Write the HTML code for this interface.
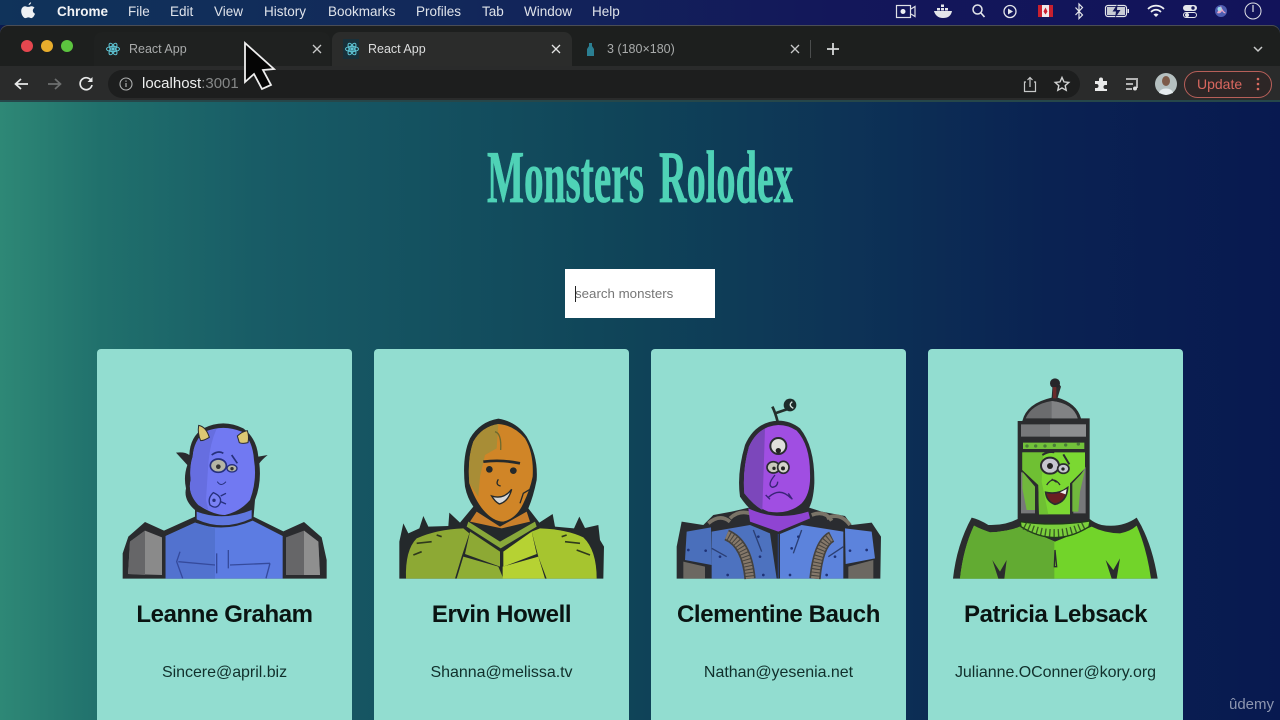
<!DOCTYPE html>
<html lang="en"><head><meta charset="utf-8"><title>Monsters Rolodex</title>
<style>
html,body{margin:0;padding:0;width:1280px;height:720px;overflow:hidden;background:#0a1a50}
body{position:relative;font-family:"Liberation Sans",sans-serif}
.a{position:absolute;white-space:nowrap}
.m{top:4px;font-size:13.5px;line-height:16px;color:#dfe3ea}
.tabt{top:41px;font-size:12.5px;line-height:16px}
.card{position:absolute;top:349px;width:255px;height:380px;background:#92ddd0;border-radius:4px;text-align:center;color:#0a1412}
.card h2{position:absolute;left:0;width:100%;top:252px;margin:0;font-size:24px;line-height:28px;font-weight:bold;letter-spacing:-.4px}
.card p{position:absolute;left:0;width:100%;top:315px;margin:0;font-size:16px;line-height:18px;color:#11302c;letter-spacing:-.03px}
</style></head><body>
<div class="a" style="left:0;top:100px;width:1280px;height:620px;background:linear-gradient(90deg,#2e8876 0%,#20706c 8%,#185c66 20%,#0f4358 50%,#0d3356 66%,#0a2252 82%,#081950 100%)"></div>
<div class="a" style="left:0;top:0;width:1280px;height:25px;background:linear-gradient(90deg,#10335a,#12285a 35%,#13175a 65%,#12135a)"></div>
<div class="a" style="left:0;top:25px;width:1280px;height:41px;background:#1d1f1e;border-radius:8px 8px 0 0;box-shadow:inset 0 1px 0 #4a4d55"></div>
<div class="a" style="left:0;top:66px;width:1280px;height:34px;background:#2a2b2b"></div>
<div class="a" style="left:0;top:100px;width:1280px;height:2px;background:#26474a"></div>
<div class="a" style="left:94px;top:32px;width:236px;height:34px;background:#1f2120;border-radius:8px 8px 0 0"></div>
<div class="a" style="left:332px;top:32px;width:240px;height:34px;background:#2b2c2b;border-radius:8px 8px 0 0"></div>
<div class="a" style="left:108px;top:70px;width:972px;height:28px;background:#1d1e1e;border-radius:14px"></div>

<div class="a m" style="left:57px;font-weight:bold;color:#f1f3f6">Chrome</div>
<div class="a m" style="left:128px">File</div><div class="a m" style="left:170px">Edit</div><div class="a m" style="left:214px">View</div><div class="a m" style="left:264px">History</div><div class="a m" style="left:328px">Bookmarks</div><div class="a m" style="left:416px">Profiles</div><div class="a m" style="left:482px">Tab</div><div class="a m" style="left:524px">Window</div><div class="a m" style="left:592px">Help</div>

<div class="a tabt" style="left:129px;color:#a9abab">React App</div>
<div class="a tabt" style="left:368px;color:#dcdddd">React App</div>
<div class="a tabt" style="left:607px;color:#a9abab">3 (180×180)</div>
<div class="a" style="left:142px;top:75px;font-size:15px;line-height:18px;color:#eeefef">localhost<span style="color:#858787">:3001</span></div>

<svg class="a" style="left:0;top:0" width="1280" height="105" viewBox="0 0 1280 105" fill="none">
<!-- apple -->
<path d="M28.500 5c.2-1.200 1.200-2.300 2.600-2.700 0 1.500-1 2.700-2.600 2.700zM25 6.200c1.100 0 1.900.7 3.200.7s2-.7 3.300-.7c1.200 0 2.300.6 3 1.600-2.500 1.600-2.100 4.800.6 6-.8 2.100-2.300 4.300-3.700 4.300-1.100 0-1.700-.7-3-.7s-1.900.7-3 .7c-2 0-4.200-3.700-4.200-6.900 0-3.100 1.900-5 3.800-5z" fill="#eef0f3"/>
<!-- traffic -->
<circle cx="27" cy="46" r="6" fill="#e5474f"/><circle cx="47" cy="46" r="6" fill="#e8ad2c"/><circle cx="67" cy="46" r="6" fill="#5cc43f"/>
<!-- react icons -->
<g stroke="#5fc6d6" stroke-width="1"><g transform="translate(113 49)"><ellipse rx="6.500" ry="2.600"/><ellipse rx="6.500" ry="2.600" transform="rotate(60)"/><ellipse rx="6.500" ry="2.600" transform="rotate(120)"/><circle r="1.200" fill="#5fc6d6"/></g>
<rect x="343" y="39" width="16" height="20" fill="#18303a" stroke="none"/>
<g transform="translate(352 49)"><ellipse rx="6.500" ry="2.600"/><ellipse rx="6.500" ry="2.600" transform="rotate(60)"/><ellipse rx="6.500" ry="2.600" transform="rotate(120)"/><circle r="1.200" fill="#5fc6d6"/></g></g>
<path d="M589 43h3v3l2 3v7h-7v-7l2-3z" fill="#2b7f92"/>
<!-- tab closes -->
<g stroke="#c8c9c9" stroke-width="1.300"><path d="M313 45l8 8M321 45l-8 8"/><path d="M552 45l8 8M560 45l-8 8" stroke="#e2e3e3"/><path d="M791 45l8 8M799 45l-8 8"/></g>
<path d="M810.500 40v18" stroke="#4b4d4d"/>
<path d="M833 43v12M827 49h12" stroke="#d8d9d9" stroke-width="1.800"/>
<path d="M1254 47l4 4 4-4" stroke="#c9caca" stroke-width="1.500"/>
<!-- toolbar -->
<path d="M28 84H16M21 79l-5.500 5 5.500 5" stroke="#e8e9e9" stroke-width="1.700"/>
<path d="M48 84h12M55 79l5.500 5-5.500 5" stroke="#6d6f6f" stroke-width="1.700"/>
<path d="M91.500 81a6 6 0 1 0 .5 4" stroke="#e8e9e9" stroke-width="1.700"/><path d="M92.500 77v5h-5z" fill="#e8e9e9"/>
<circle cx="126" cy="84" r="6" stroke="#aeb0b0" stroke-width="1.100"/><path d="M126 83v4M126 80.500v1.200" stroke="#aeb0b0" stroke-width="1.200"/>
<path d="M1026 82h-1.500v9.500h11V82H1034M1030 87v-9M1027.500 80l2.500-2.500 2.500 2.500" stroke="#c7c8c8" stroke-width="1.200"/>
<path d="M1062 77.500l2 4.400 4.800.5-3.600 3.200 1 4.700-4.200-2.400-4.200 2.400 1-4.700-3.600-3.200 4.800-.5z" stroke="#d2d3d3" stroke-width="1.400"/>
<path d="M1095 81h4v-1.500a2 2 0 0 1 4 0V81h4v4h-1.500a2 2 0 0 0 0 4h1.500v2h-12v-3h1.500a2 2 0 0 0 0-4H1095z" fill="#e9eaea"/>
<path d="M1126 79h10M1126 84h7M1126 89h6M1137 78v10" stroke="#dfe0e0" stroke-width="1.500"/><circle cx="1135" cy="88.500" r="2" fill="#dfe0e0"/>
<circle cx="1166" cy="84" r="11" fill="#b5c0c0"/><ellipse cx="1166" cy="81" rx="4" ry="5" fill="#7d5b49"/><path d="M1159 93c1-6 13-6 14 0l-7 2z" fill="#e6ecef"/>
<rect x="1184.500" y="71.500" width="87" height="26" rx="13" stroke="#b75f59" fill="#2d2626"/>
<circle cx="1258" cy="79" r="1.300" fill="#d96a60"/><circle cx="1258" cy="84" r="1.300" fill="#d96a60"/><circle cx="1258" cy="89" r="1.300" fill="#d96a60"/>
<!-- status icons -->
<rect x="896.500" y="5.500" width="14" height="12" stroke="#dfe1e6" stroke-width="1.200"/><circle cx="903" cy="11.500" r="2.500" fill="#eef0f3"/><path d="M911 9l4-2.500v10l-4-2.500" stroke="#dfe1e6" stroke-width="1.200"/>
<path d="M934 11h18c-1 5-4 7-9 7s-8-3-9-7z" fill="#e4e6ea"/><path d="M937 8h3v2.500h-3zM941 8h3v2.500h-3zM945 8h3v2.500h-3zM941 4.500h3v2.500h-3z" fill="#e4e6ea"/>
<circle cx="977.500" cy="9.500" r="4.500" stroke="#e4e6ea" stroke-width="1.500"/><path d="M981 13l3.500 4" stroke="#e4e6ea" stroke-width="1.700"/>
<circle cx="1010" cy="11.500" r="6" stroke="#e4e6ea" stroke-width="1.300"/><path d="M1008 8.500v6l5-3z" fill="#e4e6ea"/>
<rect x="1038" y="5" width="15" height="12" fill="#efe9ea"/><rect x="1038" y="5" width="4" height="12" fill="#c8202f"/><rect x="1049" y="5" width="4" height="12" fill="#c8202f"/><path d="M1045.500 7.500l2 4-2 3-2-3z" fill="#c8202f"/>
<path d="M1075.500 7.500l7 7.500-3.500 3.500V4l3.500 3.500-7 7.500" stroke="#e4e6ea" stroke-width="1.200"/>
<rect x="1105.500" y="5.500" width="21" height="11" rx="2.500" stroke="#e4e6ea" stroke-width="1.200"/><rect x="1107" y="7" width="18" height="8" fill="#c8cbd4"/><path d="M1117.500 4l-5 7.500h3.500l-1 6.500 5.500-8h-3.500z" fill="#15185a"/><rect x="1127.500" y="9" width="1.500" height="4" fill="#e4e6ea"/>
<path d="M1148 9c4.500-4.500 11.500-4.500 16 0M1151 12c3-3 7-3 10 0" stroke="#eef0f3" stroke-width="1.700"/><path d="M1153.500 14.500a3.500 3.500 0 0 1 5 0L1156 17z" fill="#eef0f3"/>
<rect x="1183" y="5" width="14" height="6" rx="3" fill="#e4e6ea"/><rect x="1183.500" y="12.500" width="13" height="5" rx="2.500" stroke="#e4e6ea"/><circle cx="1193" cy="8" r="1.700" fill="#15185a"/><circle cx="1187" cy="15" r="2" fill="#e4e6ea"/>
<circle cx="1221" cy="11" r="6" fill="#4d5db0"/><path d="M1217 13c2-4 3-6 4-7 1 3 3 6 5 7-2 1-3-1-4-2-1 2-3 3-5 2z" fill="#e7a7c8"/><circle cx="1219.500" cy="9" r="2" fill="#9ddcec"/>
<circle cx="1253" cy="11" r="8" stroke="#dfe1e6"/><path d="M1253 5v7" stroke="#dfe1e6" stroke-width="1.200"/>
</svg>

<div class="a" style="left:1197px;top:76px;font-size:14px;line-height:17px;color:#d9675f">Update</div>

<svg class="a" style="left:470px;top:130px" width="340" height="90" viewBox="470 130 340 90">
<g font-family="'Liberation Serif',serif" font-weight="bold" font-size="74" fill="#4fd2b6" stroke="#4fd2b6" stroke-width=".8">
<text x="487" y="202" textLength="157" lengthAdjust="spacingAndGlyphs">Monsters</text>
<text x="659" y="202" textLength="134" lengthAdjust="spacingAndGlyphs">Rolodex</text>
</g></svg>

<div class="a" style="left:565px;top:269px;width:150px;height:49px;background:#fff"></div>
<div class="a" style="left:575px;top:285px;font-size:13.3px;line-height:17px;color:#767676">search monsters</div>
<div class="a" style="left:575px;top:286px;width:1px;height:16px;background:#222"></div>

<div class="card" style="left:97px"><h2>Leanne Graham</h2><p>Sincere@april.biz</p></div>
<div class="card" style="left:374px"><h2>Ervin Howell</h2><p>Shanna@melissa.tv</p></div>
<div class="card" style="left:651px"><h2>Clementine Bauch</h2><p>Nathan@yesenia.net</p></div>
<div class="card" style="left:928px"><h2>Patricia Lebsack</h2><p>Julianne.OConner@kory.org</p></div>

<svg class="a" style="left:0;top:0;filter:blur(.35px)" width="1280" height="720" viewBox="0 0 1280 720" fill="none">
<!-- Monster 1 -->
<g transform="translate(100 400) scale(.33333)">
<path d="M68 536V460L85 410L135 366L192 392L285 350H460L550 394L612 366L665 412L680 480V536Z" fill="#2a2b2e"/>
<path d="M285 360V330Q250 300 258 265Q250 230 262 195L228 158Q255 155 268 165Q270 110 310 85Q370 55 430 85Q470 115 475 170L503 165Q485 180 478 190Q485 250 465 300L460 360Z" fill="#2a2b2e"/>
<path d="M197 408L285 368Q370 400 458 362L548 408V536H197Z" fill="#5c7ce2"/>
<path d="M197 408L285 368L345 385V536H197Z" fill="#5272cf"/>
<path d="M290 335Q370 365 455 330V355Q370 395 290 358Z" fill="#5f77e0"/>
<path d="M278 170Q282 120 315 95Q370 72 425 95Q458 120 462 180Q472 240 450 300Q420 335 375 345Q340 345 295 315Q262 280 272 240Q268 200 278 170Z" fill="#7179f2"/>
<path d="M278 170Q282 120 315 95L350 86Q330 130 325 190L318 300L325 330L295 315Q262 280 272 240Q268 200 278 170Z" fill="#666ee0"/>
<path d="M296 76Q318 80 328 112Q312 122 302 122Q292 100 296 76Z" fill="#dcc873" stroke="#2a2b2e" stroke-width="3"/><path d="M412 108Q428 94 442 92Q448 110 444 128Q428 132 418 128Z" fill="#dcc873" stroke="#2a2b2e" stroke-width="3"/>
<path d="M90 425L135 392L186 412V525L84 522Z" fill="#8a8a8a"/><path d="M90 425L135 392V525L84 522Z" fill="#666668"/>
<path d="M558 412L612 392L655 425L660 525H558Z" fill="#666668"/><path d="M612 392L655 425L660 525H612Z" fill="#8f8f8f"/>
<path d="M240 455L230 485L248 535M235 485L345 495M510 490L390 495M510 490L498 535M350 460V520M385 450V505" stroke="#354a9c" stroke-width="4"/>
<ellipse cx="355" cy="197" rx="24" ry="20" fill="#b5b5a5" stroke="#26307c" stroke-width="5"/><circle cx="355" cy="200" r="7" fill="#333"/><ellipse cx="396" cy="205" rx="15" ry="11" fill="#b5b5a5" stroke="#26307c" stroke-width="4"/><circle cx="396" cy="206" r="5" fill="#333"/>
<path d="M335 165Q355 150 370 160M395 165L412 190" stroke="#26307c" stroke-width="5"/>
<path d="M352 245Q362 262 378 245" stroke="#26307c" stroke-width="3"/><path d="M340 278Q322 295 330 315Q350 330 360 310Q368 290 340 278ZM362 288L378 280M362 305L378 312" stroke="#26307c" stroke-width="4" fill="#7a82f5"/><circle cx="342" cy="301" r="5" fill="#26307c"/>
</g>
<!-- Monster 2 -->
<g transform="translate(380 400) scale(.33333)">
<path d="M58 536V425L70 370L85 400L118 385L130 348L145 380L205 378L208 338L240 368L280 320Q262 295 255 260Q245 170 270 115Q300 65 355 56Q410 65 440 110Q475 170 470 240Q460 290 445 325L478 368L518 342L525 380L582 385L598 350L615 384L655 375L660 420L672 440L670 536Z" fill="#24292b"/>
<path d="M78 536Q75 450 110 415Q170 388 250 385L268 400L245 470L225 536Z" fill="#8da934"/>
<path d="M650 536Q650 450 610 412Q560 388 480 385L455 395L475 470L500 536Z" fill="#a6c52f"/>
<path d="M255 462L270 395L360 455V500Z" fill="#8da934"/><path d="M230 536L250 470L355 500L370 536Z" fill="#8fae35"/>
<path d="M470 462L455 395L370 455V500Z" fill="#b6d233"/><path d="M495 536L475 470L368 500V536Z" fill="#b6d233"/>
<path d="M265 365L360 425L465 365L470 380L362 445L260 380Z" fill="#88a83a"/>
<path d="M110 430L155 425M100 465L125 455M600 430L555 425M630 465L590 450M170 405L185 410M545 410L560 405" stroke="#2f3a1c" stroke-width="5"/>
<path d="M290 335L360 380L440 335L450 365L365 385L270 365Z" fill="#c97f2b"/>
<path d="M355 72Q305 80 280 125Q262 175 268 250Q285 300 310 330Q340 365 370 365Q410 355 430 310Q450 270 458 230Q462 160 435 115Q400 75 355 72Z" fill="#d08527"/>
<path d="M355 72Q305 80 280 125Q262 175 268 250L295 290L300 230L315 165L350 145Z" fill="#a88d36"/>
<path d="M310 185Q365 178 420 190" stroke="#24292b" stroke-width="8"/><circle cx="328" cy="208" r="10" fill="#24292b"/><circle cx="400" cy="212" r="10" fill="#24292b"/>
<path d="M355 238Q345 255 362 258" stroke="#24292b" stroke-width="4"/>
<path d="M335 288Q370 300 395 268Q385 305 358 312Q345 305 335 288Z" fill="#d7d9da" stroke="#24292b" stroke-width="4"/>
<path d="M420 310L430 280L455 265" stroke="#24292b" stroke-width="4"/><path d="M345 95Q365 100 362 150" stroke="#6e6a2e" stroke-width="4"/>
</g>
<!-- Monster 3 -->
<g transform="translate(655 390) scale(.33333)">
<path d="M65 566V470L80 395L145 405L175 375L230 365L285 352H460L500 365L570 378L590 405L650 398L678 440L676 566Z" fill="#2a2c30"/>
<path d="M370 92Q300 95 270 165Q245 250 255 320Q275 350 290 360L455 365Q475 340 478 280Q480 170 435 115Q405 92 370 92Z" fill="#2a2c30"/>
<path d="M160 400Q195 370 225 395M225 385Q250 360 285 370M470 375Q510 360 530 392M515 385Q555 365 585 405" stroke="#7a7468" stroke-width="11"/>
<path d="M170 425L285 405L345 430L365 566H170Z" fill="#4d72bf"/><path d="M375 566V432L440 405L565 425V566Z" fill="#5c83dc"/>
<path d="M95 425L168 412L170 525L90 510Z" fill="#4a6fbb"/><path d="M570 415L650 425L660 505L572 522Z" fill="#5c83dc"/>
<path d="M85 515L150 530V566H85ZM580 530L655 510V566H580Z" fill="#6c6862"/>
<path d="M280 355Q365 395 460 365L465 385L370 425L285 395Z" fill="#8f44d2"/>
<path d="M370 105Q310 108 282 170Q262 240 268 310Q300 350 340 365Q400 375 440 340Q468 310 465 250Q465 165 425 122Q400 105 370 105Z" fill="#a04ee2"/>
<path d="M330 116Q300 130 282 170Q262 240 268 310Q295 345 322 360Z" fill="#7c47bb"/>
<path d="M215 435Q275 460 285 566M480 566Q490 460 530 440" stroke="#45423e" stroke-width="34"/>
<path d="M215 435Q275 460 285 566M480 566Q490 460 530 440" stroke="#85786a" stroke-width="24" stroke-dasharray="7 3"/>
<circle cx="370" cy="168" r="24" fill="#e0e0dc" stroke="#2a2c30" stroke-width="6"/><circle cx="370" cy="182" r="8" fill="#222"/>
<ellipse cx="355" cy="232" rx="19" ry="17" fill="#c9c9bc" stroke="#2a2c30" stroke-width="5"/><ellipse cx="385" cy="232" rx="17" ry="18" fill="#d5d5cb" stroke="#2a2c30" stroke-width="5"/><circle cx="357" cy="235" r="5" fill="#222"/><circle cx="384" cy="235" r="6" fill="#222"/>
<path d="M360 255Q335 285 352 292Q368 290 368 275M340 322Q375 290 408 325M332 315L345 328M400 310L412 328" stroke="#3a2478" stroke-width="4"/>
<path d="M368 95Q360 65 352 50M360 70L395 58" stroke="#24302c" stroke-width="8"/><circle cx="405" cy="45" r="19" fill="#1e2c2a"/><path d="M412 35Q398 45 415 55" stroke="#d5e4de" stroke-width="4"/>
<path d="M370 432V566M170 475L215 500M565 470L520 500M295 420L320 485M440 420L415 490" stroke="#2b3f74" stroke-width="4"/>
<g fill="#1f3276"><circle cx="100" cy="480" r="4"/><circle cx="152" cy="482" r="4"/><circle cx="585" cy="482" r="4"/><circle cx="635" cy="480" r="4"/><circle cx="310" cy="440" r="4"/><circle cx="315" cy="500" r="4"/><circle cx="325" cy="555" r="4"/><circle cx="430" cy="440" r="4"/><circle cx="410" cy="475" r="4"/><circle cx="405" cy="555" r="4"/><circle cx="195" cy="500" r="4"/><circle cx="540" cy="500" r="4"/><circle cx="218" cy="555" r="4"/><circle cx="515" cy="555" r="4"/></g>
</g>
<!-- Monster 4 -->
<g transform="translate(935 375) scale(.33333)">
<path d="M54 611Q65 510 110 428Q130 432 160 450Q210 452 248 432V138H262Q275 85 350 68L352 40L360 10L378 35L368 68Q425 85 438 130H464V432Q480 445 500 450Q560 460 605 428Q650 500 668 611Z" fill="#2b2c2e"/>
<path d="M272 130Q290 88 350 78Q415 85 428 130Z" fill="#6b6c6e"/><path d="M350 78Q415 85 428 130H350Z" fill="#818284"/>
<circle cx="360" cy="25" r="15" fill="#26262a"/><rect x="354" y="36" width="10" height="34" fill="#6a2a2a"/>
<path d="M258 148H453V185H258Z" fill="#77787a"/><path d="M345 148H453V185H345Z" fill="#8d8e90"/>
<path d="M264 203H448V222H264Z" fill="#72c13a"/>
<g fill="#4a7b38"><circle cx="276" cy="213" r="5"/><circle cx="302" cy="213" r="5"/><circle cx="330" cy="213" r="5"/><circle cx="358" cy="211" r="5"/><circle cx="392" cy="210" r="5"/><circle cx="430" cy="207" r="5"/></g>
<path d="M258 290L300 340V415H258ZM452 275L415 335V415H452Z" fill="#77787a"/>
<path d="M262 290L300 335V405H275L262 340ZM450 285L412 325V410H430L435 350Z" fill="#71b83d"/>
<path d="M262 232H450V280L405 325V418H312L310 330L262 285Z" fill="#7bd832"/>
<path d="M262 232H325L320 320L340 418H312L310 330L262 285Z" fill="#6fc033"/>
<ellipse cx="345" cy="272" rx="27" ry="24" fill="#c6c6d0" stroke="#2b2c2e" stroke-width="6"/><circle cx="345" cy="273" r="9" fill="#222"/><ellipse cx="385" cy="281" rx="17" ry="14" fill="#c6c6d0" stroke="#2b2c2e" stroke-width="5"/><circle cx="384" cy="282" r="5" fill="#222"/>
<path d="M322 240Q340 228 358 232M385 238L403 268" stroke="#2b2c2e" stroke-width="6"/>
<path d="M335 330Q355 300 375 330M350 312L365 322" stroke="#2b2c2e" stroke-width="4"/>
<path d="M332 352Q370 360 398 338Q395 380 360 388Q335 380 332 352Z" fill="#6a1f22" stroke="#2b2c2e" stroke-width="5"/><path d="M375 352L395 342L392 358Z" fill="#eee"/>
<path d="M75 611Q85 520 117 452Q135 462 165 472Q220 470 255 455L360 500L470 455Q510 475 555 475Q585 470 605 452Q635 520 648 611Z" fill="#72d42a"/>
<path d="M75 611Q85 520 117 452Q135 462 165 472Q220 470 255 455L358 500V611Z" fill="#62ab32"/>
<path d="M256 440Q360 455 465 438L462 455Q360 520 258 455Z" fill="#7bd03c" stroke="#1f3a1a" stroke-width="4"/>
<path d="M268 452Q360 498 452 450" stroke="#2b4420" stroke-width="24" stroke-dasharray="4 9" opacity=".85"/>
<path d="M172 555L190 611H208L215 555L195 590ZM512 555L530 611H545L555 550L535 585Z" fill="#2b2c2e"/><path d="M360 525L358 575L365 575Z" stroke="#2b2c2e" stroke-width="4"/>
</g>
</svg>
<svg class="a" style="left:0;top:0" width="300" height="100" viewBox="0 0 300 100">
<path d="M245 43V82L254 74L262 89L271 85L263 70L274 69Z" fill="#050505" stroke="#eeeeee" stroke-width="1.800"/>
</svg>

<div class="a" style="left:1229px;top:696px;font-size:15px;line-height:17px;color:#8d96b0">ûdemy</div>
</body></html>
